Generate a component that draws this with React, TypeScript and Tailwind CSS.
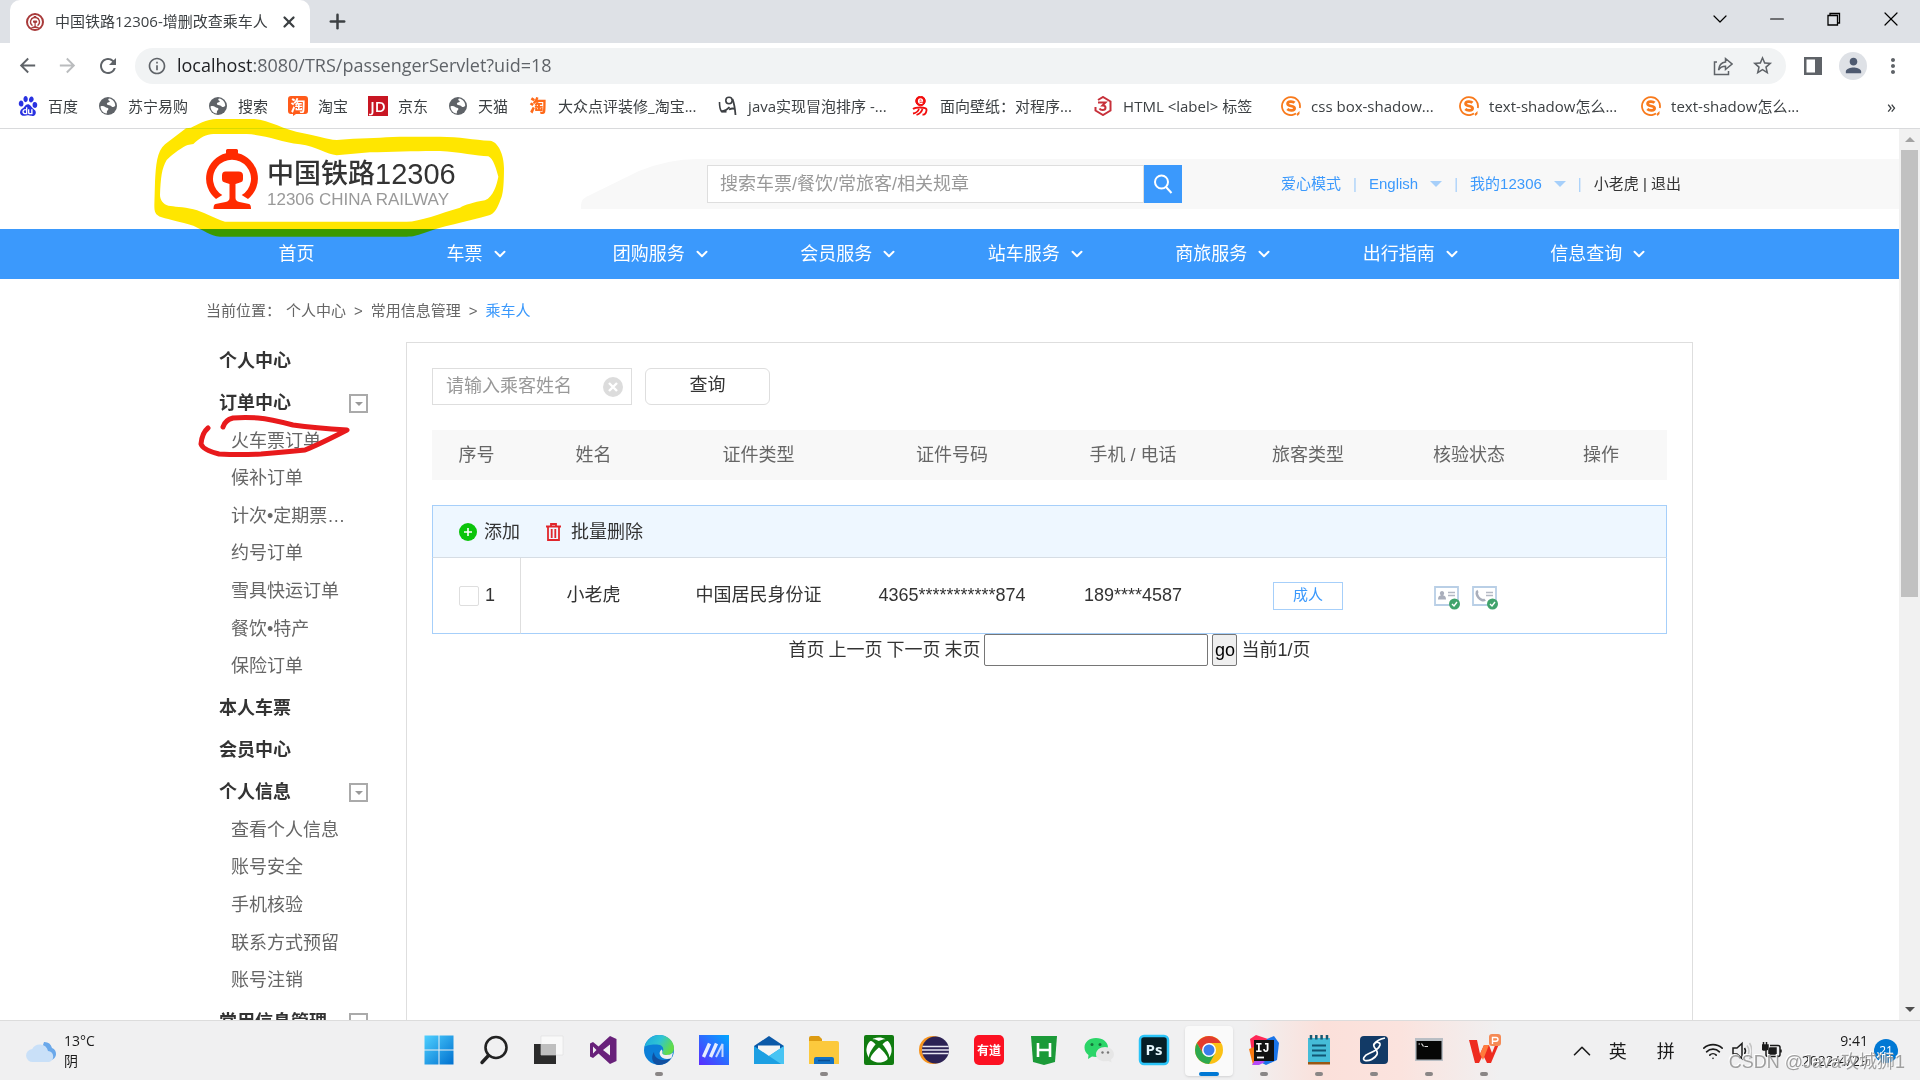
import { ReactNode } from "react";
import {
  MdArrowBack,
  MdArrowForward,
  MdInfoOutline,
  MdMoreVert,
  MdPerson,
  MdRefresh,
  MdStarBorder,
} from "react-icons/md";
import { FaXbox } from "react-icons/fa";
import { SiBaidu } from "react-icons/si";
import { ChevronDown, ChevronUp, Minus, Plus, Wifi, X } from "lucide-react";

/* ---------- bookmark icons ---------- */

const GlobeIcon = () => (
  <svg viewBox="0 0 20 20" className="size-5">
    <circle cx="10" cy="10" r="9" fill="#5f6368" />
    <path
      d="M11 2.500c-1 .8-1 1.800.2 2.200 1 .3.6 1.400-.4 1.600-1.400.300-2.200 1-1.800 2 .3.900 2 .8 3.200 1.200 1.400.500 1.600 1.800 3.200 1.600l1.800-1c.3-3.600-2.200-7-6.200-7.600z"
      fill="#fff"
    />
    <path
      d="M2.500 10.400c1.600-.8 3.500-.5 4.700.6.9.800 2.600.5 3.100 1.600.5 1.200-.9 1.700-1.300 2.600-.3.900.2 1.600-.4 2.300-3.400-.4-6-3.400-6.100-7.100z"
      fill="#fff"
    />
  </svg>
);

const PawIcon = () => <SiBaidu className="size-5 text-[#2932e1]" />;

const TaoBubbleIcon = () => (
  <svg viewBox="0 0 20 20" className="size-5">
    <path d="M3 0h14a3 3 0 0 1 3 3v12a3 3 0 0 1-3 3H8l-3 2v-2H3a3 3 0 0 1-3-3V3a3 3 0 0 1 3-3z" fill="#ff5b1a" />
    <text x="10" y="14.500" fontSize="15" fontWeight="700" textAnchor="middle" fill="#fff">
      淘
    </text>
  </svg>
);

const TaoIcon = () => (
  <svg viewBox="0 0 20 20" className="size-5 overflow-visible">
    <text x="10" y="16" fontSize="17" fontWeight="900" textAnchor="middle" fill="#ff6a1a">
      淘
    </text>
  </svg>
);

const JdIcon = () => (
  <svg viewBox="0 0 20 20" className="size-5">
    <path d="M0 0h20v20H0z" fill="#c81623" />
    <text x="10" y="15.500" fontSize="15" fontWeight="600" textAnchor="middle" fill="#fff">
      JD
    </text>
  </svg>
);

const SketchIcon = () => (
  <svg viewBox="0 0 20 20" className="size-5" fill="none" stroke="#3c3f43">
    <path d="M1.500 6c0 4 .5 7.500 2 9.500 3-.5 6-2 8-4.500" strokeWidth="1.600" />
    <path d="M3.500 15.500h5" strokeWidth="2.200" />
    <circle cx="11" cy="4.500" r="3.200" strokeWidth="1.600" />
    <path d="M14.500 3c1.500 4 2.500 9 3 16M11 13.500c2-1 4-1.500 6-.5" strokeWidth="1.800" />
  </svg>
);

const YiIcon = () => (
  <svg viewBox="0 0 20 20" className="size-5" fill="none" stroke="#f20d0d">
    <circle cx="10.500" cy="5" r="4.800" fill="#f20d0d" strokeWidth="1" />
    <path d="M8.500 5.200h4c0-3-4-3-4 0s3 2.400 4 1.500" stroke="#fff" strokeWidth="1.300" />
    <path d="M3 13c2-1.500 5-1.500 7-1.500 4 0 7 .5 6.500 3S15 19 12.500 18.500M3 17.500c3-.5 5-2 6-4.500M6.500 19c3-1 5-3 6-6" strokeWidth="1.800" />
  </svg>
);

const HexIcon = () => (
  <svg viewBox="0 0 20 20" className="size-5" fill="none" stroke="#c7303a">
    <path d="M5 4 10 1l7.500 4.500v9L10 19l-7.500-4.500V11" strokeWidth="2" />
    <path d="M5 6.500h7.500L9.500 9.500c4 0 4 4.500 0 4.500-1.500 0-2.500-.6-3-1.500" strokeWidth="2" />
  </svg>
);

const SogouIcon = () => (
  <svg viewBox="0 0 20 20" className="size-5">
    <path d="M15 17.600A9 9 0 1 1 18.800 12" fill="none" stroke="#f87a1c" strokeWidth="1.800" />
    <path d="M13.500 6.800C12 5.200 6.600 5 6.600 7.800c0 3 7 1.400 7 4.400 0 2.600-5.200 2.800-7.300.8" fill="none" stroke="#f87a1c" strokeWidth="2.800" />
    <path d="m15.500 18 3-3v3l-2 2z" fill="#f87a1c" />
  </svg>
);

type Bookmark = { name: string; icon: () => ReactNode; width?: string };

const bookmarks: Bookmark[] = [
  { name: "百度", icon: PawIcon },
  { name: "苏宁易购", icon: GlobeIcon },
  { name: "搜索", icon: GlobeIcon },
  { name: "淘宝", icon: TaoBubbleIcon },
  { name: "京东", icon: JdIcon },
  { name: "天猫", icon: GlobeIcon },
  { name: "大众点评装修_淘宝...", icon: TaoIcon, width: "w-[170px]" },
  { name: "java实现冒泡排序 -...", icon: SketchIcon, width: "w-[172px]" },
  { name: "面向壁纸：对程序...", icon: YiIcon, width: "w-[163px]" },
  { name: "HTML <label> 标签", icon: HexIcon, width: "w-[168px]" },
  { name: "css box-shadow...", icon: SogouIcon, width: "w-[158px]" },
  { name: "text-shadow怎么...", icon: SogouIcon, width: "w-[162px]" },
  { name: "text-shadow怎么...", icon: SogouIcon, width: "w-[162px]" },
];

/* ---------- browser chrome ---------- */

function RailMark({ className, color }: { className: string; color: string }) {
  return (
    <svg viewBox="0 0 52 60" className={className} fill={color}>
      <path d="M20 1.500Q20 0 21.500 0h9Q32 0 32 1.500V4.300A26 26 0 0 1 42 50L35.700 46a19 19 0 1 0-19.400 0L10 50A26 26 0 0 1 20 4.300z" />
      <path d="M19.500 22.500h13q4.500 0 4.500 4v3.500q0 3-3 3.500l-4.500 1.500V49q0 3 4 4l9.500 2q2 .5 2 5H7.500q0-4.500 2-5L19.500 53q4-1 4-4V35L19 33.500q-3-.5-3-3.500v-3.500q0-4 3.500-4z" />
    </svg>
  );
}

function TabStrip() {
  return (
    <div className="flex h-[43px] items-center justify-between bg-[#dee1e6] text-[#3c4043]">
      <div className="flex h-full items-center">
        <div className="ml-2.5 flex h-full w-[300px] items-center rounded-t-[10px] bg-white pl-4 pr-3">
          <span className="mr-[11px] flex size-[18px] items-center justify-center rounded-full border-2 border-[#a83a3a]">
            <RailMark className="size-3" color="#a83a3a" />
          </span>
          <span className="w-[217px] overflow-hidden whitespace-nowrap text-[15px]">中国铁路12306-增删改查乘车人</span>
          <button type="button" aria-label="关闭标签页" className="ml-auto">
            <X className="size-[18px]" strokeWidth={3} />
          </button>
        </div>
        <button type="button" aria-label="新标签页" className="ml-4">
          <Plus className="size-[23px]" strokeWidth={2.600} />
        </button>
      </div>
      <div className="mb-1.5 flex items-center gap-[33px] pr-[17px] text-black">
        <button type="button" aria-label="搜索标签页" className="flex w-6 justify-center">
          <ChevronDown className="size-6" strokeWidth={1.200} />
        </button>
        <button type="button" aria-label="最小化" className="flex w-6 justify-center">
          <Minus className="size-[22px]" strokeWidth={1.200} />
        </button>
        <button type="button" aria-label="还原" className="flex w-6 justify-center">
          <svg viewBox="0 0 16 16" className="size-4" fill="none" stroke="currentColor" strokeWidth="1.300">
            <path d="M2 4.500h9.500V14H2zM4 4.500V2.500h9.500V12h-2" />
          </svg>
        </button>
        <button type="button" aria-label="关闭" className="flex w-6 justify-center">
          <X className="size-6" strokeWidth={1.200} />
        </button>
      </div>
    </div>
  );
}

function AddressBar() {
  return (
    <div className="flex h-[45px] items-center bg-white pl-4 pr-[15px] text-[#5f6368]">
      <div className="flex items-center gap-[17px]">
        <button type="button" aria-label="后退">
          <MdArrowBack className="size-[23px]" />
        </button>
        <button type="button" aria-label="前进" className="text-[#babcbe]">
          <MdArrowForward className="size-[23px]" />
        </button>
        <button type="button" aria-label="重新加载">
          <MdRefresh className="size-6" />
        </button>
      </div>
      <div className="ml-[15px] flex h-9 flex-1 items-center rounded-full bg-[#f1f3f4] px-3">
        <MdInfoOutline className="size-5" />
        <span className="ml-2.5 flex-1 text-[18px] text-[#5f6368]">
          <span className="text-[#202124]">localhost</span>:8080/TRS/passengerServlet?uid=18
        </span>
        <button type="button" aria-label="分享">
          <svg viewBox="0 0 20 20" className="size-5" fill="none" stroke="currentColor" strokeWidth="1.500">
            <path d="M4 6H1.500v12.500h14V15" />
            <path d="M12.500 2.500 19 8l-6.500 5.500v-3.200c-3.500 0-5.500 1.200-7 3.700.5-4.500 3-7.500 7-8z" />
          </svg>
        </button>
        <button type="button" aria-label="添加书签" className="ml-[18px]">
          <MdStarBorder className="size-[23px]" />
        </button>
      </div>
      <button type="button" aria-label="侧边栏" className="ml-[17px]">
        <svg viewBox="0 0 20 20" className="size-5">
          <path d="M1 1h18v18H1zM3.500 3.500v13H12v-13z" fill="currentColor" fillRule="evenodd" />
        </svg>
      </button>
      <button
        type="button"
        aria-label="用户"
        className="ml-4 flex size-7 items-center justify-center rounded-full bg-[#dee1e6] text-[#4e5a70]"
      >
        <MdPerson className="size-[23px]" />
      </button>
      <button type="button" aria-label="更多" className="ml-3.5">
        <MdMoreVert className="size-6" />
      </button>
    </div>
  );
}

function BookmarksBar() {
  return (
    <div className="flex h-[41px] items-center border-b border-[#d9dadc] bg-white pb-1 pl-[18px] pr-6 text-[15px] text-[#3c4043]">
      <div className="flex flex-1 gap-5 overflow-hidden whitespace-nowrap">
        {bookmarks.map((item, i) => (
          <a key={i} href="#" className={`flex shrink-0 items-center gap-2.5 ${item.width ?? ""}`}>
            <item.icon />
            {item.name}
          </a>
        ))}
      </div>
      <button type="button" aria-label="更多书签" className="text-[18px]">
        »
      </button>
    </div>
  );
}

/* ---------- site ---------- */

const navItems = ["首页", "车票", "团购服务", "会员服务", "站车服务", "商旅服务", "出行指南", "信息查询"];

const Caret = () => <span className="border-x-[6px] border-t-[6px] border-x-transparent border-t-[#a6cffa]" />;
const Bar = () => <span className="text-[#a6cffa]">|</span>;

function SiteHeader() {
  return (
    <header className="grid h-[100px] grid-cols-[1fr_minmax(0,1487px)_1fr] items-end pb-5">
      <div className="col-start-2 flex items-end">
        <a href="#" className="flex w-[375px] items-center gap-[9px]">
          <RailMark className="h-[60px] w-[52px]" color="#ff2a00" />
          <span className="flex flex-col gap-0.5 whitespace-nowrap pt-[7px] leading-none">
            <span className="flex items-center text-[29px] leading-8 text-[#333]">
              <span className="text-[27px] font-medium">中国铁路</span>12306
            </span>
            <span className="text-[17px] leading-4 text-[#999]">12306 CHINA RAILWAY</span>
          </span>
        </a>
        <svg viewBox="0 0 126 50" className="h-[50px] w-[126px] shrink-0" fill="#f8f8f8">
          <path d="M0 50v-4q0-6 7-9L58 12Q88 0 116 0h10v50z" />
        </svg>
        <div className="flex h-[50px] flex-1 items-center bg-[#f8f8f8]">
          <form className="flex h-[38px] w-[475px]">
            <input
              type="text"
              aria-label="搜索"
              placeholder="搜索车票/餐饮/常旅客/相关规章"
              className="h-full min-w-0 flex-1 border border-[#dedede] bg-white px-3 text-[18px] placeholder:text-[#999]"
            />
            <button type="button" aria-label="搜索" className="flex w-[38px] items-center justify-center bg-[#3b99fc]">
              <svg viewBox="0 0 20 20" className="size-5" fill="none" stroke="#fff" strokeWidth="2">
                <circle cx="8.500" cy="8" r="6.500" />
                <path d="m13 13 5.500 6" />
              </svg>
            </button>
          </form>
          <div className="ml-auto flex items-center gap-3 whitespace-nowrap pr-3 text-[15px] text-[#3b99fc]">
            <a href="#">爱心模式</a>
            <Bar />
            <a href="#" className="flex items-center gap-3">
              English <Caret />
            </a>
            <Bar />
            <a href="#" className="flex items-center gap-3">
              我的12306 <Caret />
            </a>
            <Bar />
            <span className="text-[#333]">
              <a href="#">小老虎</a> | <a href="#">退出</a>
            </span>
          </div>
        </div>
      </div>
      <div className="h-[50px] bg-[#f8f8f8]" />
    </header>
  );
}

function SiteNav() {
  return (
    <nav className="h-[50px] bg-[#3b99fc] text-[18px] text-white">
      <div className="mx-auto flex h-full w-full max-w-[1487px]">
        {navItems.map((name, i) => (
          <a
            key={name}
            href="#"
            className={`flex items-center justify-center gap-2 whitespace-nowrap ${i < 2 ? "w-[181px]" : "flex-1"}`}
          >
            {name}
            {i > 0 && <ChevronDown className="size-[18px]" strokeWidth={2.600} />}
          </a>
        ))}
      </div>
    </nav>
  );
}

type MenuSection = { title: string; items?: string[]; listClass?: string };

const menu: MenuSection[] = [
  { title: "个人中心" },
  {
    title: "订单中心",
    items: ["火车票订单", "候补订单", "计次•定期票…", "约号订单", "雪具快运订单", "餐饮•特产", "保险订单"],
    listClass: "h-[263px]",
  },
  { title: "本人车票" },
  { title: "会员中心" },
  {
    title: "个人信息",
    items: ["查看个人信息", "账号安全", "手机核验", "联系方式预留", "账号注销"],
    listClass: "h-[188px]",
  },
  { title: "常用信息管理", items: [] },
];

function SideMenu() {
  return (
    <aside className="flex w-[200px] shrink-0 flex-col gap-[5px] pl-[13px] pt-px text-[18px]">
      {menu.map(section => (
        <section key={section.title}>
          <div className="flex h-[37px] items-center justify-between pr-[38px]">
            <h2 className="font-bold text-[#333]">{section.title}</h2>
            {section.items && (
              <button
                type="button"
                aria-label={section.title}
                className="flex size-[19px] items-center justify-center border-2 border-[#aaa]"
              >
                <span className="border-x-4 border-t-4 border-x-transparent border-t-[#999]" />
              </button>
            )}
          </div>
          {section.items && section.items.length > 0 && (
            <ul className={`grid auto-rows-fr items-center pl-3 text-[#666] ${section.listClass}`}>
              {section.items.map(item => (
                <li key={item} className="whitespace-nowrap leading-7">
                  <a href="#">{item}</a>
                </li>
              ))}
            </ul>
          )}
        </section>
      ))}
    </aside>
  );
}

const columns = ["序号", "姓名", "证件类型", "证件号码", "手机 / 电话", "旅客类型", "核验状态", "操作"];

function VerifiedIcon({ children }: { children: ReactNode }) {
  return (
    <svg viewBox="0 0 26 24" className="h-6 w-[26px]">
      <path d="M1 1h23v18H1z" fill="#fff" stroke="#b9cfe6" strokeWidth="1.800" />
      {children}
      <path d="M14 6.500h7M14 9.500h7" stroke="#b4b9c4" strokeWidth="1.400" />
      <circle cx="20.500" cy="18" r="5.500" fill="#41a36c" />
      <path d="m18 18 2 2 3-4" fill="none" stroke="#fff" strokeWidth="1.400" />
    </svg>
  );
}

function PassengerTable() {
  return (
    <table className="mt-[25px] w-full table-fixed border-separate border-spacing-0 text-center text-[18px] text-[#333]">
      <colgroup>
        <col className="w-[89px]" />
        <col className="w-[145px]" />
        <col className="w-[185px]" />
        <col className="w-[202px]" />
        <col className="w-[160px]" />
        <col className="w-[190px]" />
        <col className="w-[132px]" />
        <col />
      </colgroup>
      <thead>
        <tr className="h-[50px] bg-[#f8f8f8] text-[#666]">
          {columns.map(name => (
            <th key={name} className="p-0 font-normal">
              {name}
            </th>
          ))}
        </tr>
      </thead>
      <tbody>
        <tr className="h-[25px]" aria-hidden="true">
          <td colSpan={8} />
        </tr>
        <tr className="h-[53px] bg-[#eef7ff]">
          <td colSpan={8} className="border border-[#a6cffa] border-b-[#d6dde4] p-0">
            <div className="flex items-center pl-[26px] pt-px">
              <button type="button" className="flex items-center gap-[7px]">
                <svg viewBox="0 0 18 18" className="size-[18px]">
                  <circle cx="9" cy="9" r="9" fill="#0bc40b" />
                  <path d="M9 5v8M5 9h8" stroke="#fff" strokeWidth="1.600" />
                </svg>
                添加
              </button>
              <button type="button" className="ml-[26px] flex items-center gap-2.5">
                <svg viewBox="0 0 15 18" className="h-[18px] w-[15px]" fill="none" stroke="#e0262c" strokeWidth="1.800">
                  <path d="M0 3.500h15M5 3V1h5v2M2 4v13h11V4M5.700 6v9M9.300 6v9" />
                </svg>
                批量删除
              </button>
            </div>
          </td>
        </tr>
        <tr className="h-[76px]">
          <td className="border-b border-l border-r border-b-[#a6cffa] border-l-[#a6cffa] border-r-[#dedede] p-0">
            <label className="flex items-center gap-1.5 pl-[26px]">
              <input type="checkbox" className="size-5 appearance-none rounded-xs border border-[#dedede] bg-white" />1
            </label>
          </td>
          <td className="border-b border-[#a6cffa] p-0">小老虎</td>
          <td className="border-b border-[#a6cffa] p-0">中国居民身份证</td>
          <td className="border-b border-[#a6cffa] p-0">4365***********874</td>
          <td className="border-b border-[#a6cffa] p-0">189****4587</td>
          <td className="border-b border-[#a6cffa] p-0">
            <span className="mx-auto flex h-7 w-[70px] items-center justify-center border border-[#a6cffa] text-[15px] text-[#3b99fc]">
              成人
            </span>
          </td>
          <td className="border-b border-[#a6cffa] p-0">
            <span className="flex justify-center gap-3 pr-1.5 pt-1">
              <VerifiedIcon>
                <path d="M8 5a2.300 2.300 0 0 1 1 4.300c2 .4 3 1.700 3 4.200H4c0-2.500 1-3.800 3-4.200A2.300 2.300 0 0 1 8 5z" fill="#a9aebb" />
              </VerifiedIcon>
              <VerifiedIcon>
                <path d="M6 5c-2 1-1.500 4 .5 6.500S11.500 15 13 13.500" fill="none" stroke="#a9aebb" strokeWidth="2.600" />
              </VerifiedIcon>
            </span>
          </td>
          <td className="border-b border-r border-[#a6cffa] p-0" />
        </tr>
      </tbody>
    </table>
  );
}

function Pager() {
  return (
    <div className="flex items-center justify-center gap-1 whitespace-nowrap text-[18px] text-[#333]">
      <a href="#">首页</a>
      <a href="#">上一页</a>
      <a href="#">下一页</a>
      <a href="#">末页</a>
      <input
        type="text"
        aria-label="页码"
        className="h-8 w-[224px] rounded-xs border border-[#767676] bg-white px-1"
      />
      <button type="button" className="h-8 w-[25px] rounded-xs border border-[#767676] bg-[#efefef] text-black">
        go
      </button>
      <span>当前1/页</span>
    </div>
  );
}

function Content() {
  return (
    <div className="mx-auto w-full max-w-[1487px]">
      <nav className="flex h-[63px] items-center gap-2 pt-px text-[15px] text-[#666]">
        <span>当前位置：</span>
        <a href="#" className="-ml-[3px]">
          个人中心
        </a>
        <span>&gt;</span>
        <a href="#">常用信息管理</a>
        <span>&gt;</span>
        <a href="#" className="text-[#3b99fc]">
          乘车人
        </a>
      </nav>
      <div className="flex items-stretch">
        <SideMenu />
        <main className="flex-1 border border-[#dedede] p-[25px]">
          <form className="flex gap-[13px]">
            <div className="flex h-[37px] w-[200px] items-center border border-[#dedede] pl-[13px] pr-2">
              <input
                type="text"
                aria-label="乘客姓名"
                placeholder="请输入乘客姓名"
                className="w-full min-w-0 text-[18px] placeholder:text-[#999]"
              />
              <button type="button" aria-label="清除" className="shrink-0">
                <svg viewBox="0 0 20 20" className="size-5">
                  <circle cx="10" cy="10" r="10" fill="#dcdcdc" />
                  <path d="m6 6 8 8M14 6l-8 8" stroke="#fff" strokeWidth="2.400" />
                </svg>
              </button>
            </div>
            <button
              type="button"
              className="h-[37px] w-[125px] rounded-md border border-[#dedede] bg-white pb-0.5 text-[18px] text-[#333]"
            >
              查询
            </button>
          </form>
          <PassengerTable />
          <Pager />
        </main>
      </div>
    </div>
  );
}

function Scrollbar() {
  return (
    <div className="flex w-[21px] shrink-0 flex-col items-center bg-[#f1f1f1] py-2">
      <span className="border-x-[5px] border-b-[5px] border-x-transparent border-b-[#a3a3a3]" />
      <span className="mt-2 h-[447px] w-[17px] bg-[#c1c1c1]" />
      <span className="mt-auto border-x-[5px] border-t-[5px] border-x-transparent border-t-[#505050]" />
    </div>
  );
}

/* ---------- taskbar ---------- */

type App = { name: string; art: ReactNode; state?: "open" | "active" };

const apps: App[] = [
  {
    name: "开始",
    art: (
      <>
        <linearGradient id="win" x1="0" y1="0" x2="1" y2="1">
          <stop offset="0" stopColor="#4fd0ff" />
          <stop offset="1" stopColor="#0070cf" />
        </linearGradient>
        <path d="M.500.500h14v14H.500zM15.500.500h14v14h-14zM.500 15.500h14v14H.500zM15.500 15.500h14v14h-14z" fill="url(#win)" />
      </>
    ),
  },
  {
    name: "搜索",
    art: (
      <g fill="none" stroke="#222" strokeLinecap="round">
        <circle cx="17" cy="12.500" r="10.500" strokeWidth="2.600" />
        <path d="m9.500 20.500-6.500 7" strokeWidth="3.400" />
      </g>
    ),
  },
  {
    name: "任务视图",
    art: (
      <>
        <path d="M0 9h22v20H0z" fill="#2b2b2b" />
        <path d="M7 1h22v19H7z" fill="#f9f9f9" stroke="#ddd" strokeWidth=".6" />
        <path d="M7 9h15v11H7z" fill="#bfbfbf" />
      </>
    ),
  },
  {
    name: "Visual Studio",
    art: (
      <path
        d="m21 1 6.500 3v22L21 29 9.500 18.500 4 23l-3-1.500v-13L4 7l5.500 4.500zM21 9.500 14 15l7 5.500zM4 11.500v7L7.500 15z"
        fill="#68217a"
        fillRule="evenodd"
      />
    ),
  },
  {
    name: "Edge",
    state: "open",
    art: (
      <>
        <linearGradient id="edgeTop" x1="0" y1="0" x2="1" y2=".4">
          <stop offset="0" stopColor="#1aa7e0" />
          <stop offset=".55" stopColor="#2fc4d4" />
          <stop offset="1" stopColor="#62dc49" />
        </linearGradient>
        <circle cx="15" cy="15" r="15" fill="#0c7fd8" />
        <path d="M.500 12C2 5 8 0 15 0c9 0 15 6.500 15 13 0 5-4 7-7.500 7-3 0-5-1.500-4-3 2.500-4-1-7.500-5.500-7.500C8 9.500 3 10 .5 12z" fill="url(#edgeTop)" />
        <path d="M10 17c0 6 6 8.500 11 8 3-.3 5-1.500 6-2-2 4-7 7-12 7-6 0-9-7-5-13z" fill="#1150a0" />
        <path d="M18.500 17c-1 1.500.5 3 4 3 2.500 0 5-.8 6.500-2.500l-1.500 5.500c-4 2-10 1-11.500-3-1-2.500.5-5 2-5.500z" fill="#f0f0f1" />
      </>
    ),
  },
  {
    name: "MA",
    art: (
      <>
        <linearGradient id="ma" x1="0" y1="1" x2="1" y2="0">
          <stop offset="0" stopColor="#5a2bff" />
          <stop offset="1" stopColor="#00a8ff" />
        </linearGradient>
        <path d="M0 0h30v30H0z" fill="url(#ma)" />
        <path d="m4.500 22 6-13.500M11.500 22l6-13.500" stroke="#e6edff" strokeWidth="3.400" fill="none" />
        <path d="m17 22 6.500-13V22" stroke="#c8d8ff" strokeWidth="2" fill="none" />
      </>
    ),
  },
  {
    name: "邮件",
    art: (
      <>
        <path d="M0 11 15 1l15 10v3H0z" fill="#0b59a8" />
        <path d="M4 10.500h22V21H4z" fill="#f4f4f4" />
        <path d="m0 11 15 10 15-10v18H0z" fill="#1c9fe2" />
        <path d="m30 11-15 10 12 8h3z" fill="#48c4f3" />
      </>
    ),
  },
  {
    name: "文件资源管理器",
    state: "open",
    art: (
      <>
        <path d="M0 3q0-2 2-2h8l3 3v6H0z" fill="#dd9b12" />
        <path d="M0 6h28q2 0 2 2v21H0z" fill="#fcc93d" />
        <path d="M5 29v-5q0-2 2-2h16q2 0 2 2v5z" fill="#1271c4" />
        <path d="M9 25.500h12" stroke="#0a4d91" strokeWidth="1.500" />
      </>
    ),
  },
  {
    name: "Xbox",
    art: (
      <>
        <rect width="30" height="30" rx="2" fill="#107c10" />
        <FaXbox x={2} y={2} size={26} color="#fff" />
      </>
    ),
  },
  {
    name: "Eclipse",
    art: (
      <>
        <circle cx="14" cy="15" r="14" fill="#f7941e" />
        <circle cx="16.500" cy="15" r="13.500" fill="#2c2255" />
        <path d="M3.500 11.500h26M3 15h27M3.500 18.500h26" stroke="#e8e6f2" strokeWidth="1.600" />
      </>
    ),
  },
  {
    name: "有道",
    art: (
      <>
        <rect width="30" height="30" rx="5" fill="#fc1122" />
        <text x="15" y="19.500" fontSize="12" fontWeight="700" textAnchor="middle" fill="#fff">
          有道
        </text>
      </>
    ),
  },
  {
    name: "HBuilder",
    art: (
      <>
        <path d="M2 1h26l-2 26-11 3-11-3z" fill="#1b9a38" />
        <path d="M9 8v14M21 8v14M9 15h12" stroke="#fff" strokeWidth="2.600" />
      </>
    ),
  },
  {
    name: "微信",
    art: (
      <>
        <path d="M12 3c7 0 12 4.200 12 9.500S19 22 12 22c-1.500 0-3-.2-4-.5L4 24l.5-4C2 18.200.500 15.500.500 12.500.500 7.200 5 3 12 3z" fill="#2bd568" />
        <path d="M21 12c5 0 9 3.200 9 7.200 0 2.300-1.200 4-3 5.300l.5 3-3-1.600c-6.500 1.500-12.500-1.500-12.500-6.700 0-4 4-7.200 9-7.200z" fill="#e6e6e6" />
        <g fill="#14733a">
          <circle cx="8" cy="9.500" r="1.500" />
          <circle cx="16" cy="9.500" r="1.500" />
        </g>
        <g fill="#777">
          <circle cx="18.500" cy="17.500" r="1.200" />
          <circle cx="24" cy="17.500" r="1.200" />
        </g>
      </>
    ),
  },
  {
    name: "Photoshop",
    art: (
      <>
        <rect x="1" y="1" width="28" height="28" rx="4" fill="#061e26" stroke="#2bc4f8" strokeWidth="2.500" />
        <text x="15" y="20" fontSize="15" fontWeight="700" textAnchor="middle" fill="#e4f6fc">
          Ps
        </text>
      </>
    ),
  },
  {
    name: "Chrome",
    state: "active",
    art: (
      <>
        <circle cx="15" cy="15" r="14" fill="#fbc116" />
        <path d="M2.900 8A14 14 0 0 1 27.100 8H15l-6 10.500z" fill="#e33b2e" />
        <path d="M2.900 8A14 14 0 0 0 15 29l6-10.500L9 18.500z" fill="#2da94f" />
        <circle cx="15" cy="15" r="7" fill="#fff" />
        <circle cx="15" cy="15" r="5.500" fill="#3b7ded" />
      </>
    ),
  },
  {
    name: "IntelliJ IDEA",
    state: "open",
    art: (
      <>
        <path d="m1 4 6-4 12 4-9 14H3z" fill="#fe2857" />
        <path d="m0 14 8-3 4 12-8 7z" fill="#f97a12" />
        <path d="M18 4 25 1l5 7-2 17-11 5-10-5z" fill="#1a74e8" />
        <path d="m3 30 5-8 8 5-6 3z" fill="#b74af7" />
        <path d="M5 5h20v21H5z" fill="#111" />
        <path d="M8 22.500h7" stroke="#fff" strokeWidth="1.800" />
        <text x="13.500" y="17" fontSize="12" fontWeight="700" textAnchor="middle" fill="#fff" className="font-['Liberation_Mono']">
          IJ
        </text>
      </>
    ),
  },
  {
    name: "记事本",
    state: "open",
    art: (
      <>
        <path d="M4 3h22v24H4z" fill="#45bcd8" />
        <path d="M4 27h22v2.500H4z" fill="#9a5714" />
        <path d="M8 10.500h14M8 15.500h14M8 20.500h14" stroke="#115573" strokeWidth="1.800" />
        <path d="M7 0v4.500M12.300 0v4.500M17.600 0v4.500M23 0v4.500" stroke="#185a72" strokeWidth="2.500" />
      </>
    ),
  },
  {
    name: "SQLyog",
    state: "open",
    art: (
      <>
        <rect x="1" y="1" width="28" height="28" rx="4" fill="#123a66" />
        <path d="M26 3c-5 1-9 3-11 6-2 3.500 5 6 3 10.500-2 4-8 7-12 6-3-1-1-5 4-7 5-2 10-4.500 11-8.500.5-3-4-4-6-.5" fill="none" stroke="#fff" strokeWidth="1.700" />
      </>
    ),
  },
  {
    name: "命令提示符",
    state: "open",
    art: (
      <>
        <path d="M1 3h28v23H1z" fill="#b9bec4" />
        <path d="M2.500 6h25v18.500h-25z" fill="#060606" />
        <path d="M4.500 9h1.500M7.500 8.500l2 3M10.500 11.500H14" stroke="#ddd" strokeWidth="1.200" />
      </>
    ),
  },
  {
    name: "WPS",
    state: "open",
    art: (
      <>
        <path d="M0 5h8l3 14 4-9h5l3 8 4-10 3 1-8 19h-4l-4-8-4 8H6z" fill="#ee2b1f" />
        <path d="m11 19 4-9h5l-6 15z" fill="#ff7a3d" />
        <rect x="20" y="-1" width="12" height="12" rx="3" fill="#f58a55" />
        <path d="M23.500 9V2.500h3.500q2 0 2 1.800T27 6.200h-3.500" stroke="#fff" strokeWidth="1.400" fill="none" />
      </>
    ),
  },
];

function Taskbar() {
  return (
    <footer className="grid h-[60px] grid-cols-[1fr_auto_1fr] border-t border-[#dcdcdc] bg-[#f0f0f1] text-[15px] leading-5 text-[#1b1b1b]">
      <div className="flex items-center gap-2 pl-[26px]">
        <svg viewBox="0 0 30 24" className="h-6 w-[30px]">
          <path d="M18 3a8 8 0 0 1 8 6c3 1 4 3.500 4 6s-2 6-6 6H8l8-12z" fill="#6aa8ea" />
          <path d="M7 23a6.500 6.500 0 0 1-.8-13A8.500 8.500 0 0 1 22 12a5.600 5.600 0 0 1 1 11z" fill="#c9e0f8" />
        </svg>
        <div className="text-[14px]">
          <div>13°C</div>
          <div>阴</div>
        </div>
      </div>
      <div className="flex bg-[linear-gradient(90deg,transparent_76%,#fbe0da_83%,#fbe3de_90%,transparent_99%)] pl-0.5">
        {apps.map(app => (
          <button key={app.name} type="button" aria-label={app.name} className="flex w-[55px] justify-center pt-[5px]">
            <span
              className={`flex h-[50px] w-[48px] flex-col items-center justify-between rounded pt-[9px] ${
                app.state === "active" ? "bg-[#fafafa] shadow-sm" : ""
              }`}
            >
              <svg viewBox="0 0 30 30" className="size-[30px] overflow-visible">
                {app.art}
              </svg>
              {app.state === "open" && <span className="h-1 w-2 rounded-full bg-[#8a8686]" />}
              {app.state === "active" && <span className="h-1 w-5 rounded-full bg-[#0078d4]" />}
            </span>
          </button>
        ))}
      </div>
      <div className="flex items-center justify-end pr-[22px]">
        <ChevronUp className="size-[30px]" strokeWidth={1.300} />
        <span className="ml-3 text-[18px]">英</span>
        <span className="ml-[30px] text-[18px]">拼</span>
        <Wifi className="ml-[27px] size-[22px]" strokeWidth={1.800} />
        <svg viewBox="0 0 20 20" className="ml-2 size-5" fill="none" stroke="#1b1b1b" strokeWidth="1.500">
          <path d="M1 7h4l5-4.500v15L5 13H1z" />
          <path d="M12.500 7q2 3 0 6" />
          <path d="M15 4.500q4 5.500 0 11M17.500 2q5 8 0 16" stroke="#c4c4c4" />
        </svg>
        <svg viewBox="0 0 20 20" className="ml-2.5 size-5" fill="none" stroke="#1b1b1b" strokeWidth="1.500">
          <path d="M8 4.500h8a2 2 0 0 1 2 2v7a2 2 0 0 1-2 2H6a2 2 0 0 1-2-2V9M19 8.500v3" />
          <path d="M8 7h6v6H7V9z" fill="#1b1b1b" />
          <path d="M0 4h6v3q0 2-3 2T0 7zM1.500 4V1M4.500 4V1" fill="#1b1b1b" />
        </svg>
        <div className="ml-5 text-right text-[14px]">
          <div>9:41</div>
          <div>2022/4/29</div>
        </div>
        <span className="ml-1.5 flex size-6 items-center justify-center rounded-full bg-[#0078d4] text-[12px] text-white">
          21
        </span>
      </div>
    </footer>
  );
}

/* hand-drawn marker strokes on top of the window */
function Annotations() {
  return (
    <>
      <svg
        viewBox="0 0 1140 375"
        className="pointer-events-none absolute left-[140px] top-[115px] h-[125px] w-[380px] mix-blend-darken"
        fill="#ffe600"
        fillRule="evenodd"
      >
        <path d="M153 38C170 30 200 12 230 12L340 12C390 15 430 45 490 55C530 62 560 74 590 75L640 71C700 70 740 65 800 65L900 65C960 65 1000 75 1050 77C1075 80 1092 120 1092 160C1092 200 1090 230 1085 245C1075 270 1070 290 1050 300C980 320 900 335 850 355C830 362 820 365 800 365L240 365C210 362 190 345 160 332C120 320 90 315 65 307C45 300 43 290 43 270L45 200C48 150 50 110 75 88L138 40ZM160 87C180 68 200 57 220 57L320 57C380 60 420 80 480 88C530 95 560 118 590 121L690 112C760 110 850 107 900 108C960 112 1010 122 1045 124C1060 130 1070 165 1075 185C1070 210 1060 245 1035 256C1000 262 975 270 960 278C900 295 840 320 800 320L255 320C220 310 190 290 160 283C130 275 100 275 85 272C70 268 60 255 60 240C62 190 65 160 80 135C100 115 130 95 143 90Z" />
      </svg>
      <svg
        viewBox="0 0 160 50"
        className="pointer-events-none absolute left-[195px] top-[412px] h-[50px] w-[160px]"
        fill="none"
        stroke="#e81a1c"
        strokeWidth="5"
        strokeLinecap="round"
        strokeLinejoin="round"
      >
        <path d="M13 16Q7 21 6 32Q8 38 24 42Q45 43 66 42Q90 40 110 38Q125 32 152 18Q120 16 98 13Q75 7 63 6Q50 5 38 6Q30 8 28 15" />
      </svg>
      <span className="pointer-events-none absolute bottom-1.5 right-[15px] text-[18px] leading-6 text-[#8a8a8a]/80 [text-shadow:-1px_-1px_0_#fff]">
        CSDN @Java攻城狮1
      </span>
    </>
  );
}

export default function App() {
  return (
    <div className="relative isolate flex h-screen flex-col overflow-hidden bg-white font-['Liberation_Sans','Noto_Sans_CJK_SC',sans-serif]">
      <div className="shrink-0 font-['Open_Sans','Noto_Sans_CJK_SC',sans-serif]">
        <TabStrip />
        <AddressBar />
        <BookmarksBar />
      </div>
      <div className="flex min-h-0 flex-1 overflow-hidden">
        <div className="min-w-0 flex-1 overflow-hidden">
          <SiteHeader />
          <SiteNav />
          <Content />
        </div>
        <Scrollbar />
      </div>
      <div className="shrink-0 font-['Open_Sans','Noto_Sans_CJK_SC',sans-serif]">
        <Taskbar />
      </div>
      <Annotations />
    </div>
  );
}
